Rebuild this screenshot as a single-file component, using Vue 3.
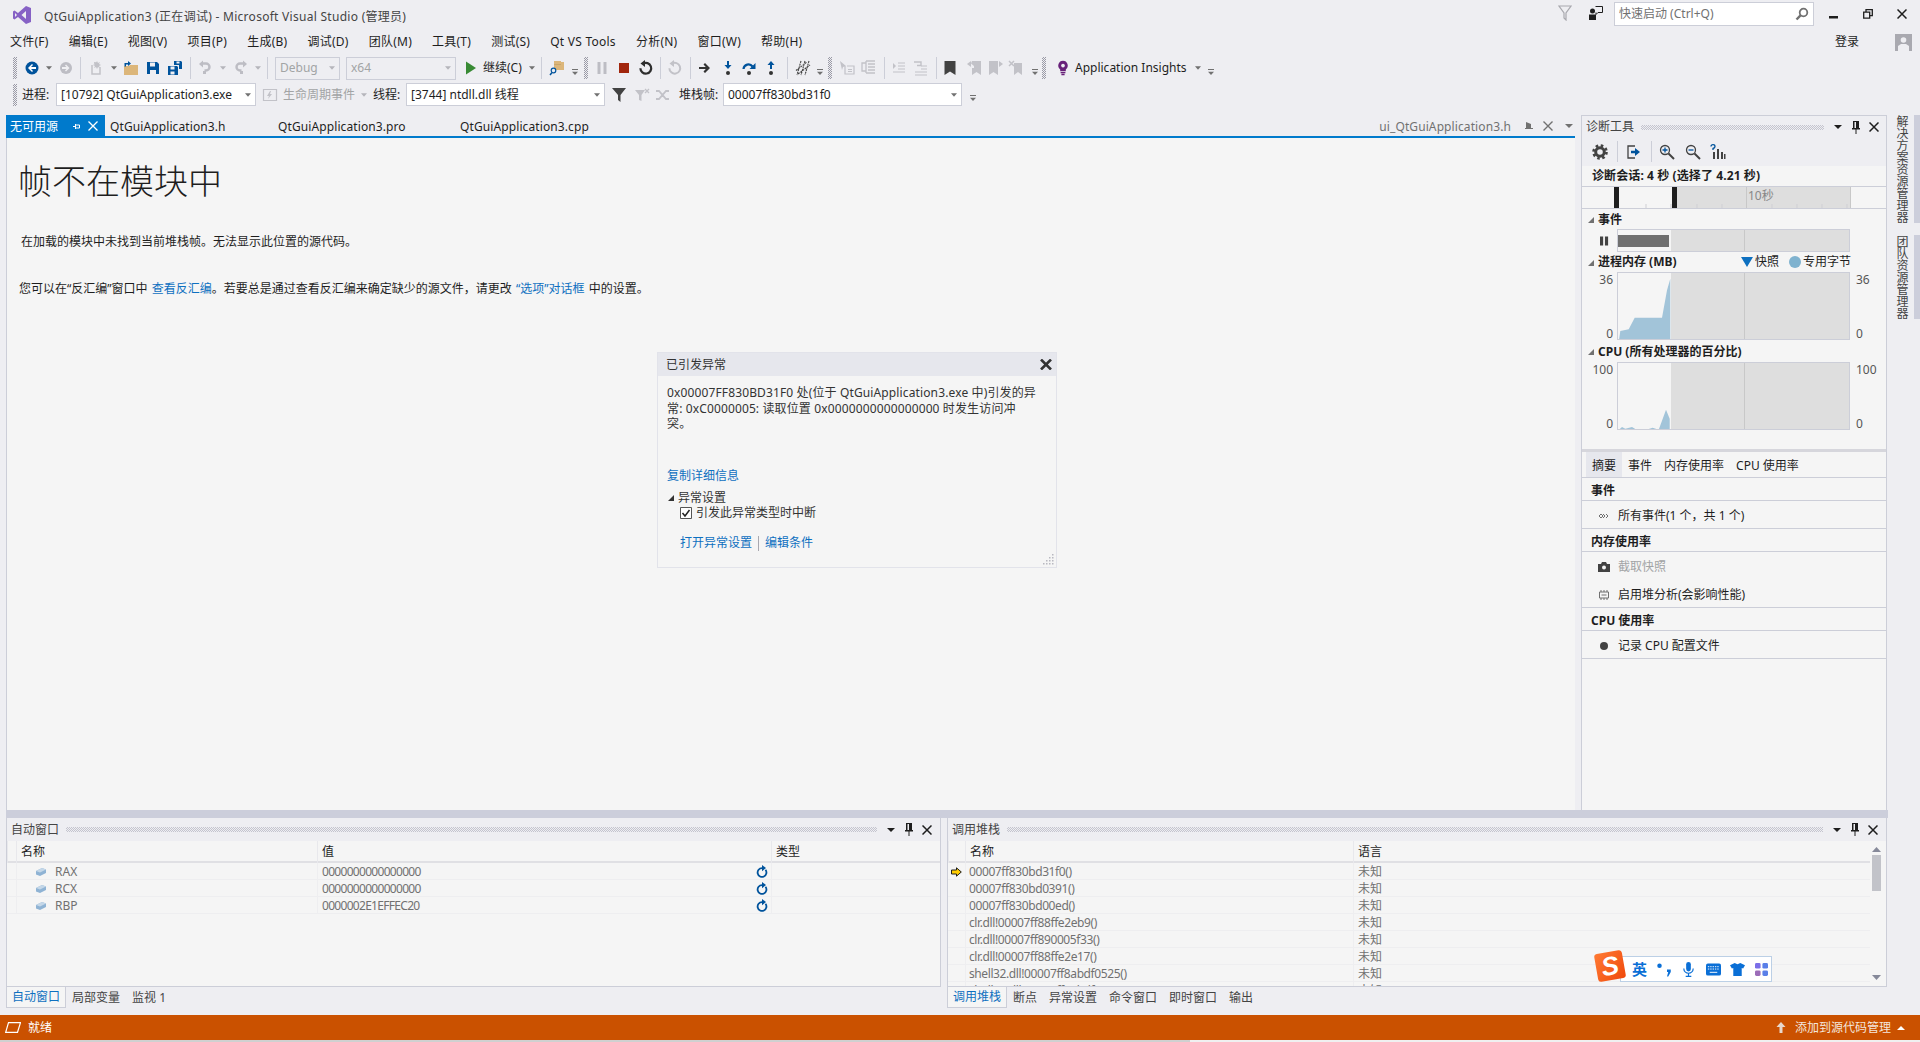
<template>
  <div class="ide">
    <!-- icon sheet -->
    <svg class="sheet">
      <symbol id="vs" viewBox="0 0 20 20"><path fill="#8661c5" d="M14 1l5 2v14l-5 2-8-7-3.500 2.600L1 13.500V6.500l1.500-1L6 8zM14 6l-4.500 4 4.500 4zM3 8v4l2-2z"/></symbol>
      <symbol id="back" viewBox="0 0 16 16"><circle cx="8" cy="8" r="6.500" fill="#00539c"/><path fill="#fff" d="M8 4l1 1-2 2h5v2H7l2 2-1 1-4-4z"/></symbol>
      <symbol id="fwd" viewBox="0 0 16 16"><circle cx="8" cy="8" r="6" fill="#bdbdc4"/><path fill="#f0f0f3" d="M8 4.500l-1 1 1.500 1.500H4v2h4.500L7 10.500l1 1L11.500 8z"/></symbol>
      <symbol id="newp" viewBox="0 0 16 16"><path fill="none" stroke="#c2c2c8" stroke-width="1.500" d="M4 5v9h8V7M9 3H6"/><path fill="#c2c2c8" d="M9 1l1 2 2-1-1 2 2 1-2 1 1 2-2-1-1 2-1-2-2 1 1-2-2-1 2-1-1-2 2 1z"/></symbol>
      <symbol id="open" viewBox="0 0 16 16"><path fill="#dcb67a" d="M1 6h5l1-1h8v10H1z"/><path fill="#00539c" d="M5 1l3 2.500L5 6V4.500H3V6.500H1.500V3H5z"/></symbol>
      <symbol id="save" viewBox="0 0 16 16"><path fill="#00539c" d="M2 2h10l2 2v10H2z"/><path fill="#eeeef2" d="M5 2.500h5v4H5zM5 10h6v4H5z"/></symbol>
      <symbol id="saveall" viewBox="0 0 16 16"><path fill="#00539c" d="M7 1h7l1 1v7h-3V5H7zM1 6h9l1 1v8H1z"/><path fill="#eeeef2" d="M3.500 6.500h4v3h-4zM3.500 11.500h4v3h-4zM9.500 1.500h3v2h-3z"/></symbol>
      <symbol id="undo" viewBox="0 0 16 16"><path fill="none" stroke="#bdbdc4" stroke-width="2.400" d="M5 3.500h4a3.500 3.500 0 0 1 0 7H7.500"/><path fill="#bdbdc4" d="M2 4l4-3.500v7z"/><path fill="#bdbdc4" d="M6 11h3v3H6z"/></symbol>
      <symbol id="redo" viewBox="0 0 16 16"><path fill="none" stroke="#bdbdc4" stroke-width="2.400" d="M11 3.500H7a3.500 3.500 0 0 0 0 7h1.500"/><path fill="#bdbdc4" d="M14 4l-4-3.500v7z"/><path fill="#bdbdc4" d="M7 11h3v3H7z"/></symbol>
      <symbol id="play" viewBox="0 0 16 16"><path fill="#388a34" d="M3 1.500L13 8 3 14.500z"/></symbol>
      <symbol id="fsearch" viewBox="0 0 16 16"><path fill="#dcb67a" d="M5 1h7v1h3v8H5z"/><path fill="#c9a66c" d="M5 4h7v1H5z"/><circle cx="4.500" cy="10.500" r="2.300" fill="#eeeef2" stroke="#00539c" stroke-width="1.200"/><path stroke="#00539c" stroke-width="1.500" d="M3 12.500L1 15"/></symbol>
      <symbol id="pause" viewBox="0 0 16 16"><path fill="#bdbdc4" d="M3.500 2h3v12h-3zM9.500 2h3v12h-3z"/></symbol>
      <symbol id="stop" viewBox="0 0 16 16"><path fill="#a1260d" d="M3 3h10v10H3z"/></symbol>
      <symbol id="restart" viewBox="0 0 16 16"><path fill="none" stroke="#2e2e2e" stroke-width="2.200" d="M5 3.600a5.400 5.400 0 1 1-2.600 4.600"/><path fill="#2e2e2e" d="M7 0v7L2.500 3.500z"/></symbol>
      <symbol id="restartd" viewBox="0 0 16 16"><path fill="none" stroke="#c2c2c8" stroke-width="2" d="M5 3.600a5.400 5.400 0 1 1-2.600 4.600"/><path fill="#c2c2c8" d="M7 0v7L2.500 3.500z"/></symbol>
      <symbol id="next" viewBox="0 0 16 16"><path fill="#333" d="M8 3l5 5-5 5-1.500-1.500L8.800 9H2V7h6.800L6.500 4.500z"/></symbol>
      <symbol id="into" viewBox="0 0 16 16"><path fill="#00539c" d="M7 1h2v4h2.500L8 9 4.500 5H7z"/><circle cx="8" cy="13" r="2" fill="#333"/></symbol>
      <symbol id="over" viewBox="0 0 16 16"><path fill="none" stroke="#00539c" stroke-width="2.200" d="M2.500 9a5 5 0 0 1 9-2.500"/><path fill="#00539c" d="M14.500 3v6h-6z"/><circle cx="8" cy="13" r="2" fill="#333"/></symbol>
      <symbol id="outp" viewBox="0 0 16 16"><path fill="#00539c" d="M7 9h2V5h2.500L8 1 4.500 5H7z"/><circle cx="8" cy="13" r="2" fill="#333"/></symbol>
      <symbol id="hatch" viewBox="0 0 16 16"><path stroke="#424242" stroke-width="1.100" stroke-dasharray="2 .8" fill="none" d="M1 10.500L12 2M3 14L15 5M6 1L2 15M10 1L6 15M14 1l-4 14"/></symbol>
      <symbol id="d1" viewBox="0 0 16 16"><path fill="none" stroke="#c2c2c8" stroke-width="1.200" d="M6 6v8h9V6H8"/><path fill="#c2c2c8" d="M1 1l6 5-3 1-1 3zM9 9h4v1H9zM9 11h4v1H9z"/></symbol>
      <symbol id="d2" viewBox="0 0 16 16"><path fill="none" stroke="#c2c2c8" stroke-width="1.300" d="M5 1h9M7 4h7M7 7h7M7 10h7M5 13h9M5 1v12M1 3h4v8H1z"/></symbol>
      <symbol id="d3" viewBox="0 0 16 16"><path stroke="#c2c2c8" stroke-width="1.200" d="M7 3h7M7 6h7M7 9h7M2 12h12"/><path fill="#c2c2c8" d="M2 3l3 3-3 3z"/></symbol>
      <symbol id="d4" viewBox="0 0 16 16"><path stroke="#c2c2c8" stroke-width="1.200" d="M8 6h6M8 9h6M2 12h12M2 15h12"/><path fill="none" stroke="#c2c2c8" stroke-width="1.400" d="M1 2h7v3.500H4"/></symbol>
      <symbol id="mark" viewBox="0 0 16 16"><path fill="#424242" d="M2.500 1h11v14L8 11.500 2.500 15z"/></symbol>
      <symbol id="m1" viewBox="0 0 16 16"><path fill="#c2c2c8" d="M5 1h9v14l-4.500-3L5 15V8h2V6L4 3.500z"/><path fill="#c2c2c8" d="M0 4l4-3v6z"/></symbol>
      <symbol id="m2" viewBox="0 0 16 16"><path fill="#c2c2c8" d="M2 1h9v14l-4.500-3L2 15z"/><path fill="#c2c2c8" d="M16 4l-4-3v6z"/></symbol>
      <symbol id="m3" viewBox="0 0 16 16"><path fill="#c2c2c8" d="M6 3h8v12l-4-3-4 3z"/><path stroke="#c2c2c8" stroke-width="1.500" d="M1 1l5 5M6 1L1 6"/></symbol>
      <symbol id="bulb" viewBox="0 0 16 20"><path fill="#68217a" d="M8 1a6 6 0 0 1 3.500 10.800V14h-7v-2.200A6 6 0 0 1 8 1z"/><circle cx="8" cy="7" r="2.300" fill="#eeeef2"/><path fill="#68217a" d="M5 15h6v1.500H5zM6 17.300h4V19H6z"/></symbol>
      <symbol id="ad" viewBox="0 0 7 4"><path fill="#717171" d="M0 0h7L3.500 4z"/></symbol>
      <symbol id="add" viewBox="0 0 7 4"><path fill="#b5b5bb" d="M0 0h7L3.500 4z"/></symbol>
      <symbol id="ov" viewBox="0 0 7 8"><path fill="#717171" d="M0 0h7v1H0zM0 3h7L3.500 7z"/></symbol>
      <symbol id="lifecycle" viewBox="0 0 16 16"><path fill="none" stroke="#c2c2c8" stroke-width="1.200" d="M1.500 2.500h13v11h-13z"/><path fill="#c2c2c8" d="M8 4L5 9h2l-1 3 4-5H8l1-3z"/></symbol>
      <symbol id="filter" viewBox="0 0 16 16"><path fill="#424242" d="M1 1h14L9.500 8v7L7 13V8z"/></symbol>
      <symbol id="filterd" viewBox="0 0 16 16"><path fill="#c2c2c8" d="M1 3h10L7.500 8v6L5 13V8z"/><path stroke="#c2c2c8" stroke-width="1.300" d="M11 2l4 4M15 2l-4 4"/></symbol>
      <symbol id="swap" viewBox="0 0 16 16"><path stroke="#c2c2c8" stroke-width="1.800" fill="none" d="M1 4h3l7 8h3M1 12h3l7-8h3"/></symbol>
      <symbol id="chev" viewBox="0 0 8 4"><path fill="#1e1e1e" d="M0 0h8L4 4z"/></symbol>
      <symbol id="pin" viewBox="0 0 8 13"><path fill="#1e1e1e" d="M1 0h6v7h1v1.500H4.500V13h-1V8.500H0V7h1zM2.500 1v6H4V1z"/></symbol>
      <symbol id="x" viewBox="0 0 10 10"><path stroke="#1e1e1e" stroke-width="1.500" d="M.5.500l9 9M9.500.500l-9 9"/></symbol>
      <symbol id="refresh" viewBox="0 0 12 13"><path fill="none" stroke="#00539c" stroke-width="1.800" d="M9.500 4.800A4.400 4.400 0 1 1 6 3.100"/><path fill="#00539c" d="M6 0l4 3.100-4 3.100z"/></symbol>
      <symbol id="reg" viewBox="0 0 10 8"><path fill="#8fb3d4" d="M0 3l6-3 4 1.500V5L4 8 0 6.500z"/><path fill="#c4d7e8" d="M0 3l6-3 4 1.500L4 4.500z"/></symbol>
    </svg>

    <header class="titlebar">
      <svg class="logo"><use href="#vs" /></svg>
      <span class="title">QtGuiApplication3 (正在调试) - Microsoft Visual Studio (管理员)</span>
      <svg class="funnel" viewBox="0 0 14 16"><path fill="none" stroke="#a8a8ae" stroke-width="1.200" d="M1 1h12L8 8v7L6 13V8z" /></svg>
      <svg class="feedback" viewBox="0 0 16 16">
        <circle cx="4.500" cy="6" r="2.500" fill="#1e1e1e" /><path fill="#1e1e1e" d="M1 9.500h7V15H1z" />
        <path fill="none" stroke="#1e1e1e" d="M7.500 1.500h7v6H10L8 9.500v-2" />
      </svg>
      <div class="launch">
        <span>快速启动 (Ctrl+Q)</span>
        <svg viewBox="0 0 14 14"><circle cx="8.500" cy="5.500" r="3.800" fill="none" stroke="#717171" stroke-width="1.800" /><path stroke="#717171" stroke-width="2.400" d="M5.800 8.200L1.500 12.500" /></svg>
      </div>
      <div class="winbtns">
        <svg viewBox="0 0 10 10"><path fill="#1e1e1e" d="M0 7h9v2.500H0z" /></svg>
        <svg viewBox="0 0 10 10"><path fill="none" stroke="#1e1e1e" stroke-width="1.300" d="M.7 3.200h6v6h-6zM3 3V.7h6.300v6H7" /></svg>
        <svg viewBox="0 0 10 10"><path stroke="#1e1e1e" stroke-width="1.500" d="M.5.500l9 9M9.500.500l-9 9" /></svg>
      </div>
    </header>

    <nav class="menubar">
      <span v-for="m in menus" :key="m" class="menu">{{ m }}</span>
      <span class="login">登录</span>
      <svg class="avatar" viewBox="0 0 17 17"><path fill="#a9a9b0" d="M0 0h17v17H0z" /><circle cx="8.500" cy="6" r="2.800" fill="#eeeef2" /><path fill="#eeeef2" d="M3 17v-5l3-2h5l3 2v5z" /></svg>
    </nav>

    <div class="toolbar tb1">
      <template v-for="(t, i) in bar1" :key="i">
        <span v-if="t.k === 'grip'" class="grip"></span>
        <span v-else-if="t.k === 'sep'" class="sep" :style="{ width: t.w + 'px' }"><i></i></span>
        <span v-else-if="t.k === 'gap'" :style="{ width: t.w + 'px' }"></span>
        <span v-else-if="t.k === 'combo'" class="dimcombo" :style="{ width: t.w + 'px' }">
          {{ t.text }}<svg class="caret"><use href="#add" /></svg>
        </span>
        <span v-else-if="t.k === 'text'" class="tbtext" :style="{ width: t.w + 'px' }">{{ t.text }}</span>
        <span v-else class="cell" :style="{ width: t.w + 'px' }">
          <svg :class="t.k"><use :href="'#' + t.i" /></svg>
        </span>
      </template>
    </div>

    <div class="toolbar tb2">
      <template v-for="(t, i) in bar2" :key="i">
        <span v-if="t.k === 'grip'" class="grip"></span>
        <span v-else-if="t.k === 'combo'" class="combo" :style="{ width: t.w + 'px' }">
          {{ t.text }}<svg class="caret"><use href="#ad" /></svg>
        </span>
        <span v-else-if="t.k === 'text'" class="tbtext" :class="{ dim: t.dim }" :style="{ width: t.w + 'px' }">{{ t.text }}</span>
        <span v-else class="cell" :style="{ width: t.w + 'px' }">
          <svg :class="t.k"><use :href="'#' + t.i" /></svg>
        </span>
      </template>
    </div>

    <div class="workspace">
      <div class="dock">
        <div class="top">
          <section class="doc">
            <div class="tabs">
              <span class="tab active">无可用源
                <svg class="tabpin" viewBox="0 0 9 9"><path fill="none" stroke="#fff" d="M3.500 2v5M3.500 3h4v3h-4M1 4.500h2.500" /></svg>
                <svg class="tabx" viewBox="0 0 10 10"><path stroke="#fff" stroke-width="1.300" d="M.5.500l9 9M9.500.500l-9 9" /></svg>
              </span>
              <span class="tab t1">QtGuiApplication3.h</span>
              <span class="tab t2">QtGuiApplication3.pro</span>
              <span class="tab t3">QtGuiApplication3.cpp</span>
              <span class="tab preview">ui_QtGuiApplication3.h</span>
              <svg class="previewpin" viewBox="0 0 10 10"><path fill="#717171" d="M2 1l5 2v4h2v1H1V7h1z" /></svg>
              <svg class="previewx" viewBox="0 0 10 10"><path stroke="#717171" stroke-width="1.400" d="M.5.500l9 9M9.500.500l-9 9" /></svg>
              <svg class="previewchev" viewBox="0 0 8 4"><path fill="#717171" d="M0 0h8L4 4z" /></svg>
            </div>
            <div class="page">
              <h1>帧不在模块中</h1>
              <p class="p1">在加载的模块中未找到当前堆栈帧。无法显示此位置的源代码。</p>
              <p class="p2">您可以在“反汇编”窗口中 <a>查看反汇编</a>。若要总是通过查看反汇编来确定缺少的源文件，请更改 <a>“选项”对话框</a> 中的设置。</p>

              <div class="popup">
                <div class="pophead">
                  <span>已引发异常</span>
                  <svg viewBox="0 0 12 11"><path stroke="#333" stroke-width="2.600" d="M1 .5l10 10M11 .5l-10 10" /></svg>
                </div>
                <div class="popbody">
                  <div class="msg">0x00007FF830BD31F0 处(位于 QtGuiApplication3.exe 中)引发的异<br />常: 0xC0000005: 读取位置 0x0000000000000000 时发生访问冲<br />突。</div>
                  <a class="copy">复制详细信息</a>
                  <div class="exset"><i class="tri"></i>异常设置</div>
                  <label class="chk">
                    <svg viewBox="0 0 12 12"><path fill="#fff" stroke="#555" d="M.5.500h11v11H.5z" /><path fill="none" stroke="#222" stroke-width="1.500" d="M2.500 6l2.500 3 4.500-6" /></svg>
                    引发此异常类型时中断
                  </label>
                  <div class="poplinks"><a>打开异常设置</a><i></i><a>编辑条件</a></div>
                </div>
                <svg class="resize" viewBox="0 0 11 11"><path fill="#b8b8c0" d="M9 0h1.500v1.500H9zM9 3h1.500v1.500H9zM6 3h1.500v1.500H6zM9 6h1.500v1.500H9zM6 6h1.500v1.500H6zM3 6h1.500v1.500H3zM9 9h1.500v1.500H9zM6 9h1.500v1.500H6zM3 9h1.500v1.500H3zM0 9h1.500v1.500H0z" /></svg>
              </div>
            </div>
          </section>

          <aside class="diag">
            <div class="ptitle diagtitle">
              <span>诊断工具</span><i class="dots"></i>
              <svg class="chev"><use href="#chev" /></svg>
              <svg class="pinic"><use href="#pin" /></svg>
              <svg class="xic"><use href="#x" /></svg>
            </div>
            <div class="diagbar">
              <svg class="g1" viewBox="0 0 16 16"><circle cx="8" cy="8" r="4.300" fill="none" stroke="#424242" stroke-width="3" /><circle cx="8" cy="8" r="6.500" fill="none" stroke="#424242" stroke-width="2.600" stroke-dasharray="2.550 2.550" /></svg>
              <i class="bsep s1"></i>
              <svg class="g2" viewBox="0 0 16 16"><path fill="none" stroke="#424242" stroke-width="1.300" d="M9 2H2v12h7" /><path fill="#00539c" d="M9 4l5 4-5 4V9.200H5V6.800h4z" /></svg>
              <i class="bsep s2"></i>
              <svg class="g3" viewBox="0 0 16 16"><circle cx="6" cy="6" r="4.500" fill="none" stroke="#424242" stroke-width="1.300" /><path stroke="#424242" stroke-width="2" d="M9.500 9.500L15 15" /><path stroke="#00539c" stroke-width="1.300" d="M3.500 6h5M6 3.500v5" /></svg>
              <svg class="g4" viewBox="0 0 16 16"><circle cx="6" cy="6" r="4.500" fill="none" stroke="#424242" stroke-width="1.300" /><path stroke="#424242" stroke-width="2" d="M9.500 9.500L15 15" /><path stroke="#00539c" stroke-width="1.300" d="M3.500 6h5" /></svg>
              <svg class="g5" viewBox="0 0 16 16"><path fill="#424242" d="M3 8h2v7H3zM7 5h2v10H7zM11 8h2v7h-2zM14 10h1.500v5H14z" /><path fill="none" stroke="#00539c" stroke-width="1.300" d="M1 2.500Q1 .7 3 .7t2 1.800Q5 4 3 4.500V6" /></svg>
            </div>
            <div class="session">诊断会话: 4 秒 (选择了 4.21 秒)</div>
            <svg class="timeline" viewBox="0 0 304 21">
              <path fill="#dedede" d="M95 0h173v21H95z" />
              <path stroke="#c8c8c8" d="M164.500 0v21M268.500 0v21" />
              <path stroke="#cfcfd4" d="M64 17v4M89 17v4M115 17v4M140 17v4M190 17v4M215 17v4M240 17v4M265 17v4" />
              <path fill="#1e1e1e" d="M32 0h5v21h-5zM90 0h5v21h-5z" />
              <text x="166" y="13" class="tick">10秒</text>
            </svg>

            <div class="dhead evhead"><i class="dtri"></i>事件</div>
            <div class="drow">
              <span class="ylab pausecell"><svg viewBox="0 0 10 10"><path fill="#424242" d="M0 0h3.500v10H0zM5.500 0H9v10H5.500z" /></svg></span>
              <svg class="evbar" viewBox="0 0 233 23">
                <path fill="#dedede" d="M0 0h233v23H0z" /><path fill="#f5f5f5" d="M0 0h54v23H0z" />
                <path fill="#707070" d="M1 6h51v12H1z" /><path stroke="#c8c8c8" d="M127.500 0v23" />
              </svg>
            </div>
            <div class="dhead">
              <i class="dtri"></i>进程内存 (MB)
              <span class="legend">
                <svg viewBox="0 0 12 10"><path fill="#0e70c0" d="M0 0h12L6 10z" /></svg><b>快照</b>
                <i class="ldot"></i><b>专用字节</b>
              </span>
            </div>
            <div class="drow chartrow">
              <span class="ylab"><em>36</em><em>0</em></span>
              <svg class="chart" viewBox="0 0 233 68">
                <path fill="#dedede" d="M0 0h233v68H0z" /><path fill="#f5f5f5" d="M0 0h54v68H0z" />
                <path stroke="#c8c8c8" d="M127.500 0v68" />
                <polygon fill="#a2c4d9" points="2,68 3.300,59 11.700,57.300 17.700,45.700 45,45.700 50,18.300 53.300,6.700 53.300,68" />
              </svg>
              <span class="ylab right"><em>36</em><em>0</em></span>
            </div>
            <div class="dhead cpuhead"><i class="dtri"></i>CPU (所有处理器的百分比)</div>
            <div class="drow chartrow">
              <span class="ylab"><em>100</em><em>0</em></span>
              <svg class="chart" viewBox="0 0 233 68">
                <path fill="#dedede" d="M0 0h233v68H0z" /><path fill="#f5f5f5" d="M0 0h54v68H0z" />
                <path stroke="#c8c8c8" d="M127.500 0v68" />
                <polygon fill="#a2c4d9" points="1.700,68 5,65 8.300,66.700 15,65 18.300,67 31.700,67 35.700,65.700 41.700,67.700 49,47.700 52.700,56.700 52.700,68" />
              </svg>
              <span class="ylab right"><em>100</em><em>0</em></span>
            </div>

            <div class="dsplit"></div>
            <div class="dtabs">
              <span class="on">摘要</span><span>事件</span><span>内存使用率</span><span>CPU 使用率</span>
            </div>
            <div class="sect">事件</div>
            <div class="item first">
              <svg viewBox="0 0 12 6"><path fill="none" stroke="#717171" d="M1 3l2-2 2 2-2 2zM5 1l2 2-2 2M8 1l2 2-2 2" /></svg>
              所有事件(1 个，共 1 个)
            </div>
            <div class="sect">内存使用率</div>
            <div class="item dimmed">
              <svg viewBox="0 0 12 10"><path fill="#424242" d="M0 2h3l1-2h4l1 2h3v8H0z" /><circle cx="6" cy="5.500" r="2" fill="#f5f5f5" /></svg>
              截取快照
            </div>
            <div class="item second">
              <svg viewBox="0 0 12 10"><path fill="none" stroke="#717171" d="M1.500 2h9v6h-9z" /><path stroke="#717171" d="M3 0v2M6 0v2M9 0v2M3 8v2M6 8v2M9 8v2M3.500 5h5" /></svg>
              启用堆分析(会影响性能)
            </div>
            <div class="sect">CPU 使用率</div>
            <div class="item first">
              <svg viewBox="0 0 12 10"><circle cx="6" cy="5" r="4" fill="#424242" /></svg>
              记录 CPU 配置文件
            </div>
          </aside>
        </div>

        <div class="splitter"></div>

        <div class="bottom">
          <section class="pane left">
            <div class="pbody">
              <div class="ptitle">
                <span>自动窗口</span><i class="dots"></i>
                <svg class="chev"><use href="#chev" /></svg>
                <svg class="pinic"><use href="#pin" /></svg>
                <svg class="xic"><use href="#x" /></svg>
              </div>
              <div class="grid autos head">
                <span></span><span>名称</span><span>值</span><span>类型</span>
              </div>
              <div v-for="r in autos" :key="r.name" class="grid autos row">
                <span></span>
                <span class="namecell"><svg><use href="#reg" /></svg>{{ r.name }}</span>
                <span class="valcell"><b>{{ r.val }}</b><svg><use href="#refresh" /></svg></span>
                <span></span>
              </div>
            </div>
            <div class="ptabs">
              <span class="on">自动窗口</span><span>局部变量</span><span>监视 1</span>
            </div>
          </section>

          <section class="pane right">
            <div class="pbody">
              <div class="ptitle">
                <span>调用堆栈</span><i class="dots"></i>
                <svg class="chev"><use href="#chev" /></svg>
                <svg class="pinic"><use href="#pin" /></svg>
                <svg class="xic"><use href="#x" /></svg>
              </div>
              <div class="stackwrap">
                <div class="stacktable">
                  <div class="grid stack head"><span></span><span>名称</span><span>语言</span></div>
                  <div v-for="(f, i) in frames" :key="f" class="grid stack row">
                    <span class="gutter">
                      <svg v-if="i === 0" viewBox="0 0 11 10"><path fill="#ffcc00" stroke="#1e1e1e" d="M.5 3h5V.8L10.300 5 5.500 9.200V7h-5z" /></svg>
                    </span>
                    <span class="frame">{{ f }}</span><span>未知</span>
                  </div>
                </div>
                <div class="scroll">
                  <svg viewBox="0 0 9 5"><path fill="#868999" d="M0 5l4.500-5L9 5z" /></svg>
                  <i></i>
                  <svg class="dn" viewBox="0 0 9 5"><path fill="#868999" d="M0 0l4.500 5L9 0z" /></svg>
                </div>
              </div>
            </div>
            <div class="ptabs">
              <span class="on">调用堆栈</span><span>断点</span><span>异常设置</span><span>命令窗口</span><span>即时窗口</span><span>输出</span>
            </div>
          </section>
        </div>
      </div>

      <div class="rail">
        <div class="railtab big"><span>解决方案资源管理器</span></div>
        <div class="railtab small"><span>团队资源管理器</span></div>
      </div>
    </div>

    <footer class="status">
      <svg class="stbox" viewBox="0 0 16 11"><path fill="none" stroke="#fff" stroke-width="1.200" d="M3.500.7h12l-3 9.600H.7z" /></svg>
      <span>就绪</span>
      <span class="spacer"></span>
      <svg class="stup" viewBox="0 0 10 11"><path fill="#e8d8cc" d="M5 0l4.500 5H6.500v6h-3V5H.5z" /></svg>
      <span class="src">添加到源代码管理</span>
      <svg class="stcaret" viewBox="0 0 8 4"><path fill="#fff" d="M0 4l4-4 4 4z" /></svg>
    </footer>
    <div class="edge"></div>

    <div class="ime">
      <div class="imebar">
        <span class="ying">英</span>
        <svg viewBox="0 0 12 12"><circle cx="2" cy="3" r="1.800" fill="#0a6fd6" /><path fill="#0a6fd6" d="M8 6h3v2l-2 3.500H8L9 8H8z" /></svg>
        <svg viewBox="0 0 12 16"><rect x="3.500" y="0" width="5" height="10" rx="2.500" fill="#0a6fd6" /><path fill="none" stroke="#0a6fd6" stroke-width="1.300" d="M1 7a5 5 0 0 0 10 0M6 12v3M3 15.300h6" /></svg>
        <svg viewBox="0 0 16 13"><rect width="16" height="13" rx="2" fill="#0a6fd6" /><path stroke="#fff" stroke-dasharray="1.500 1" d="M2 3.500h12M2 6h12" /><path stroke="#fff" d="M4 9.500h8" /></svg>
        <svg viewBox="0 0 16 14"><path fill="#0a6fd6" d="M5 0l3 1.500L11 0l5 2.500L14 6l-1.500-.5V14h-9V5.500L2 6 0 2.500z" /></svg>
        <svg class="apps" viewBox="0 0 14 14"><rect width="6" height="6" rx="1.500" fill="#7b6ee8" /><rect x="8" width="6" height="6" rx="1.500" fill="#5a7fe8" /><rect y="8" width="6" height="6" rx="1.500" fill="#9b6cb8" /><rect x="8" y="8" width="6" height="6" rx="1.500" fill="#5a7fe8" /></svg>
      </div>
      <div class="slogo"><span>S</span></div>
    </div>
  </div>
</template>

<script setup>
const menus = ['文件(F)', '编辑(E)', '视图(V)', '项目(P)', '生成(B)', '调试(D)', '团队(M)', '工具(T)', '测试(S)', 'Qt VS Tools', '分析(N)', '窗口(W)', '帮助(H)']

const ic = (i, w) => ({ k: 'ic', i, w })
const ad = (w = 6, i = 'ad') => ({ k: 'ad', i, w })
const ov = (w = 12) => ({ k: 'ov', i: 'ov', w })
const sep = (w = 2) => ({ k: 'sep', w })
const grip = { k: 'grip' }

const bar1 = [
  grip, ic('back', 28), ad(), ic('fwd', 28), sep(1), ic('newp', 30), ad(), ic('open', 28), ic('save', 16), ic('saveall', 28), sep(),
  ic('undo', 28), ad(8, 'add'), ic('redo', 28), ad(6, 'add'), sep(12), { k: 'gap', w: 2 },
  { k: 'combo', w: 65, text: 'Debug' }, { k: 'gap', w: 6 }, { k: 'combo', w: 110, text: 'x64' }, { k: 'gap', w: 5 },
  ic('play', 20), { k: 'text', w: 43, text: '继续(C)' }, ad(16), sep(), ic('fsearch', 30), ov(6), { k: 'gap', w: 5 }, grip,
  ic('pause', 26), ic('stop', 18), ic('restart', 26), sep(), ic('restartd', 28), sep(),
  ic('next', 28), ic('into', 18), ic('over', 24), ic('outp', 20), sep(12), ic('hatch', 20), ov(14), grip,
  ic('d1', 28), ic('d2', 16), sep(14), ic('d3', 16), ic('d4', 28), sep(),
  ic('mark', 26), ic('m1', 24), ic('m2', 16), ic('m3', 26), ov(), grip, { k: 'gap', w: 6 }, ic('bulb', 20),
  { k: 'text', w: 118, text: 'Application Insights' }, ad(14), ov(),
]

const bar2 = [
  grip, { k: 'text', w: 38, text: '进程:' }, { k: 'combo', w: 200, text: '[10792] QtGuiApplication3.exe' }, { k: 'text', w: 5, text: '' },
  ic('lifecycle', 18), { k: 'text', w: 80, text: '生命周期事件', dim: true }, ad(10, 'add'), { k: 'text', w: 37, text: '线程:' },
  { k: 'combo', w: 199, text: '[3744] ntdll.dll 线程' }, ic('filter', 28), ic('filterd', 18), ic('swap', 24),
  { k: 'text', w: 48, text: '堆栈帧:' }, { k: 'combo', w: 239, text: '00007ff830bd31f0' }, ov(22),
]

const autos = [
  { name: 'RAX', val: '0000000000000000' },
  { name: 'RCX', val: '0000000000000000' },
  { name: 'RBP', val: '0000002E1EFFEC20' },
]

const frames = [
  '00007ff830bd31f0()',
  '00007ff830bd0391()',
  '00007ff830bd00ed()',
  'clr.dll!00007ff88ffe2eb9()',
  'clr.dll!00007ff890005f33()',
  'clr.dll!00007ff88ffe2e17()',
  'shell32.dll!00007ff8abdf0525()',
  'shell32.dll!00007ff8abdf0000()',
]
</script>

<style>
html, body { margin: 0; padding: 0; background: #eeeef2; overflow: hidden; }
</style>

<style scoped>
.ide {
  position: relative;
  width: 1920px;
  height: 1042px;
  overflow: hidden;
  background: #eeeef2;
  color: #1e1e1e;
  font: 12px/16px "Noto Sans", "Noto Sans CJK SC", sans-serif;
}
.sheet { position: absolute; width: 0; height: 0; }
svg { display: block; flex: none; }
i, em { font-style: normal; }

/* title + menu */
.titlebar { display: flex; align-items: center; height: 32px; }
.logo { width: 20px; height: 20px; margin: -2px 0 0 12px; }
.title { margin-left: 12px; padding-top: 1px; color: #444; white-space: nowrap; letter-spacing: .28px; }
.funnel { width: 14px; height: 16px; margin: -6px 0 0 auto; }
.feedback { width: 16px; height: 16px; margin: -6px 0 0 16px; }
.launch {
  display: flex; align-items: center; justify-content: space-between;
  box-sizing: border-box; width: 200px; height: 24px; margin: -4px 0 0 10px; padding: 0 4px;
  background: #fff; border: 1px solid #ccced8; color: #717171;
}
.launch svg { width: 14px; height: 14px; }
.winbtns { display: flex; margin: -5px 13px 0 15px; gap: 24px; }
.winbtns svg { width: 10px; height: 10px; }

.menubar { display: flex; align-items: center; height: 20px; }
.menu { padding: 0 10px; white-space: nowrap; letter-spacing: .25px; }
.login { margin-left: auto; color: #1e1e1e; }
.avatar { width: 17px; height: 17px; margin: 0 8px 0 36px; }

/* toolbars */
.toolbar { display: flex; align-items: center; padding-left: 12px; white-space: nowrap; }
.tb1 { height: 24px; margin-top: 4px; }
.tb2 { height: 23px; margin-top: 3px; }
.grip {
  flex: none; width: 6px; height: 22px;
  background: repeating-conic-gradient(#9a9aa6 0 25%, transparent 0 50%) 1px 0 / 2px 2px;
  background-clip: content-box;
  padding: 0 1px; box-sizing: border-box;
}
.sep { flex: none; display: flex; justify-content: center; height: 22px; }
.sep i { width: 1px; background: #ccced8; }
.cell { flex: none; display: flex; align-items: center; justify-content: center; height: 22px; }
.ic { width: 16px; height: 16px; }
.ad { width: 6px; height: 4px; }
.ov { width: 6px; height: 7px; margin-top: 8px; }
.tbtext { flex: none; box-sizing: border-box; padding-left: 2px; }
.tbtext.dim { color: #a2a4a5; }
.tb2 .tbtext { padding-left: 4px; }
.dimcombo, .combo {
  flex: none; display: flex; align-items: center; justify-content: space-between;
  box-sizing: border-box; height: 23px; padding: 0 4px;
}
.dimcombo { border: 1px solid #ccced8; color: #a2a4a5; }
.combo { background: #fff; border: 1px solid #ccced8; color: #1e1e1e; }
.caret { width: 6px; height: 4px; }

/* main area */
.workspace { display: flex; height: 900px; margin-top: 9px; }
.dock { width: 1882px; margin-left: 6px; }
.top { display: flex; height: 695px; }
.splitter { height: 8px; background: #cccedb; }
.bottom { display: flex; height: 197px; }

/* document well */
.doc { display: flex; flex-direction: column; width: 1569px; }
.tabs { position: relative; display: flex; height: 21px; border-bottom: 2px solid #007acc; flex: none; }
.tab { display: flex; align-items: center; height: 21px; padding: 2px 5px 0; box-sizing: border-box; white-space: nowrap; letter-spacing: .1px; }
.tab.active { width: 99px; padding-left: 4px; background: #007acc; color: #fff; position: relative; letter-spacing: 0; }
.tabpin { position: absolute; left: 66px; top: 7px; width: 9px; height: 9px; }
.tabx { position: absolute; left: 82px; top: 6px; width: 10px; height: 10px; }
.tab.t1 { width: 168px; }
.tab.t2 { width: 182px; }
.tab.preview { margin-left: auto; margin-right: 59px; color: #717171; }
.previewpin { position: absolute; top: 6px; width: 10px; height: 10px; right: 41px; }
.previewx { position: absolute; right: 22px; top: 6px; width: 10px; height: 10px; }
.previewchev { position: absolute; right: 2px; top: 9px; width: 8px; height: 4px; }

.page {
  position: relative; flex: 1;
  background: #f5f5f5; border-left: 1px solid #ccced8;
}
h1 { margin: 0; padding: 20px 0 0 11px; font-size: 34px; line-height: 46px; font-weight: 300; color: #1e1e1e; }
.p1 { margin: 0; padding: 30px 0 0 14px; color: #1e1e1e; white-space: nowrap; }
.p2 { margin: 0; padding: 31px 0 0 12px; white-space: nowrap; word-spacing: 1px; }
a { color: #0e70c0; }

/* exception popup */
.popup {
  position: absolute; left: 650px; top: 214px;
  box-sizing: border-box; width: 400px; height: 216px;
  background: #f5f5f5; border: 1px solid #e2e3ea;
}
.pophead {
  display: flex; align-items: center; justify-content: space-between;
  height: 23px; padding: 0 3px 0 8px; background: #e6e7ed; color: #333;
}
.pophead svg { width: 12px; height: 11px; margin-right: 1px; }
.popbody { padding: 9px 9px 0; white-space: nowrap; color: #333; }
.msg { line-height: 15.500px; height: 83px; letter-spacing: .13px; }
.copy { display: block; height: 20px; }
.exset { display: flex; align-items: center; height: 16px; margin-top: 2px; margin-left: 1px; color: #333; }
.tri { width: 0; height: 0; margin-right: 4px; border-left: 6px solid transparent; border-bottom: 6px solid #333; }
.chk { display: flex; align-items: center; gap: 4px; height: 16px; margin: -1px 0 0 13px; }
.chk svg { width: 12px; height: 12px; }
.poplinks { display: flex; align-items: center; margin: 14px 0 0 13px; }
.poplinks i { width: 1px; height: 15px; margin: 0 6px; background: #a8a8b0; }
.resize { position: absolute; right: 2px; bottom: 2px; width: 11px; height: 11px; }

/* diagnostics */
.diag {
  box-sizing: border-box; width: 306px; margin-left: 6px;
  background: #f5f5f5; border: 1px solid #ccced8; border-bottom: 0;
}
.ptitle { display: flex; align-items: center; flex: none; height: 23px; padding-left: 4px; background: #eeeef2; color: #444; }
.diagtitle { height: 21px; padding-top: 1px; box-sizing: border-box; }
.diagtitle .xic { margin-right: 7px; }
.dots {
  flex: 1; height: 5px; margin: 0 0 0 7px;
  background: repeating-conic-gradient(#c4c4ce 0 25%, transparent 0 50%) 0 0 / 2px 2px;
}
.chev { width: 8px; height: 4px; margin-left: 10px; }
.pinic { width: 8px; height: 13px; margin-left: 10px; }
.xic { width: 10px; height: 10px; margin: 0 8px 0 9px; }

.diagbar { position: relative; display: flex; align-items: center; height: 29px; background: #eeeef2; }
.diagbar svg { width: 16px; height: 16px; }
.g1 { margin-left: 10px; }
.bsep { width: 1px; height: 21px; background: #ccced8; }
.s1 { margin-left: 9px; }
.g2 { margin-left: 8px; }
.s2 { margin-left: 9px; }
.g3 { margin-left: 7px; }
.g4 { margin-left: 10px; }
.g5 { margin-left: 9px; }
.session { height: 20px; padding-left: 10px; font-weight: 700; line-height: 20px; white-space: nowrap; letter-spacing: .1px; }
.timeline { box-sizing: content-box; width: 304px; height: 21px; border-top: 1px solid #ccced8; border-bottom: 1px solid #ccced8; }
.tick { font: 12px "Noto Sans", "Noto Sans CJK SC", sans-serif; fill: #888; }

.dhead { position: relative; display: flex; align-items: center; height: 20px; padding-left: 16px; font-weight: 700; white-space: nowrap; box-sizing: border-box; }
.evhead { padding-top: 1px; }
.cpuhead { height: 21px; }
.dtri {
  position: absolute; left: 6px; top: 8px; width: 0; height: 0;
  border-left: 6px solid transparent; border-bottom: 6px solid #717171;
}
.legend { position: absolute; right: 35px; top: 2px; display: flex; align-items: center; font-weight: 400; }
.legend b { font-weight: 400; }
.legend svg { width: 12px; height: 10px; margin-right: 2px; }
.ldot { width: 12px; height: 12px; margin: 0 2px 0 10px; border-radius: 50%; background: #7fb2cf; }

.drow { display: flex; height: 23px; }
.chartrow { height: 69px; }
.ylab {
  display: flex; flex-direction: column; justify-content: space-between;
  box-sizing: border-box; flex: none; width: 35px; padding: 0 4px 0 0; text-align: right; color: #555;
}
.chartrow .ylab { height: 70px; }
.ylab.right { width: 40px; padding: 0 0 0 6px; text-align: left; }
.pausecell { justify-content: center; align-items: center; padding: 0 0 0 10px; }
.pausecell svg { width: 9px; height: 10px; }
.evbar { width: 233px; height: 23px; outline: 1px solid #ccced8; outline-offset: -1px; }
.chart { width: 233px; height: 68px; outline: 1px solid #ccced8; outline-offset: -1px; }

.dsplit { height: 3px; margin-top: 18px; background: #d6d6dc; }
.dtabs { display: flex; height: 25px; padding-left: 4px; border-bottom: 1px solid #ccced8; align-items: stretch; }
.dtabs span { display: flex; align-items: center; padding: 3px 6px 0; white-space: nowrap; }
.dtabs .on { background: #e6e7ed; }
.sect { height: 22px; padding-left: 9px; line-height: 25px; font-weight: 700; border-bottom: 1px solid #ccced8; }
.item { display: flex; align-items: center; padding: 2px 0 0 16px; box-sizing: border-box; }
.item svg { width: 12px; height: 10px; margin-right: 8px; }
.item.first { height: 28px; border-bottom: 1px solid #ccced8; }
.item.dimmed { height: 28px; color: #a2a4a5; }
.item.second { height: 28px; border-bottom: 1px solid #ccced8; }

/* bottom panes */
.pane { display: flex; flex-direction: column; }
.pane.left { width: 935px; }
.pane.right { width: 940px; margin-left: 6px; }
.pbody {
  display: flex; flex-direction: column; height: 169px; box-sizing: border-box; overflow: hidden;
  background: #f5f5f5; border: 1px solid #ccced8; border-width: 0 1px 1px 1px;
}
.grid { display: grid; }
.autos { grid-template-columns: 9px 301px 454px 152px; }
.stack { grid-template-columns: 17px 388px 1fr; }
.head { height: 22px; box-sizing: border-box; border-bottom: 2px solid #e0e0e4; line-height: 22px; }
.head span { padding-left: 4px; border-left: 1px solid #e8e8ec; }
.head span:first-child { padding: 0; }
.row { height: 17px; box-sizing: border-box; line-height: 17px; color: #717171; border-bottom: 1px solid #eeeef0; white-space: nowrap; }
.row > span { padding-left: 4px; border-left: 1px solid #eeeef0; }
.row > span:first-child { padding: 0; border-left: 0; }
.namecell { display: flex; align-items: center; padding-left: 19px !important; }
.namecell svg { width: 10px; height: 8px; margin-right: 9px; }
.valcell { position: relative; }
.valcell b { font-weight: 400; letter-spacing: -.7px; }
.frame { letter-spacing: -.4px; padding-left: 3px !important; }
.valcell svg { position: absolute; right: 3px; top: 2px; width: 12px; height: 13px; }
.stackwrap { display: flex; flex: 1; overflow: hidden; }
.stacktable { width: 924px; }
.gutter { display: flex; align-items: center; justify-content: center; }
.gutter svg { width: 11px; height: 10px; }
.scroll { position: relative; width: 14px; padding-left: 2px; }
.scroll svg { width: 9px; height: 5px; margin-top: 6px; }
.scroll i { display: block; width: 9px; height: 36px; margin-top: 3px; background: #c2c3c9; }
.scroll .dn { position: absolute; left: 2px; top: 134px; margin: 0; }
.ptabs { display: flex; height: 21px; }
.ptabs span { display: flex; align-items: center; padding: 1px 6px 0; white-space: nowrap; color: #444; }
.ptabs .on { box-sizing: border-box; width: 60px; justify-content: center; padding: 0; color: #0e70c0; background: #f5f5f5; border: 1px solid #ccced8; border-top: 0; }

/* right rail */
.rail { flex: 1; }
.railtab { display: flex; justify-content: flex-end; border-right: 6px solid #cccedb; }
.railtab span { writing-mode: vertical-rl; margin-right: 6px; color: #444; line-height: 14px; white-space: nowrap; }
.railtab.big { height: 108px; }
.railtab.small { height: 84px; margin-top: 12px; }

/* status */
.status { display: flex; align-items: center; height: 25px; background: #ca5100; color: #fff; }
.stbox { width: 16px; height: 11px; margin: 0 7px 0 5px; }
.spacer { flex: 1; }
.stup { width: 10px; height: 11px; margin-right: 9px; }
.src { color: #f4e6dc; }
.stcaret { width: 8px; height: 4px; margin: 0 15px 0 6px; }
.edge { height: 2px; background: linear-gradient(90deg, #d0d0d0 0 62%, #f0f0f0 62%); }

/* sogou IME bar */
.ime { position: absolute; left: 1595px; top: 952px; width: 177px; height: 30px; }
.imebar {
  position: absolute; left: 25px; top: 4px; right: 0; bottom: 0;
  display: flex; align-items: center; gap: 9.500px; padding-left: 11px;
  background: #fff; border: 1px solid #bcd0e6; box-sizing: border-box;
}
.imebar svg { width: 15px; height: 15px; }
.ying { color: #0a6fd6; font-size: 15px; font-weight: 700; }
.imebar .apps { width: 13px; height: 13px; }
.slogo {
  position: absolute; left: 1px; top: 0; width: 28px; height: 28px; transform: rotate(-10deg);
  display: flex; align-items: center; justify-content: center; border-radius: 3px;
  background: linear-gradient(135deg, #ff7a33, #f04a0c);
}
.slogo span { color: #fff; font: italic 700 26px/28px "Liberation Sans", sans-serif; }
</style>
